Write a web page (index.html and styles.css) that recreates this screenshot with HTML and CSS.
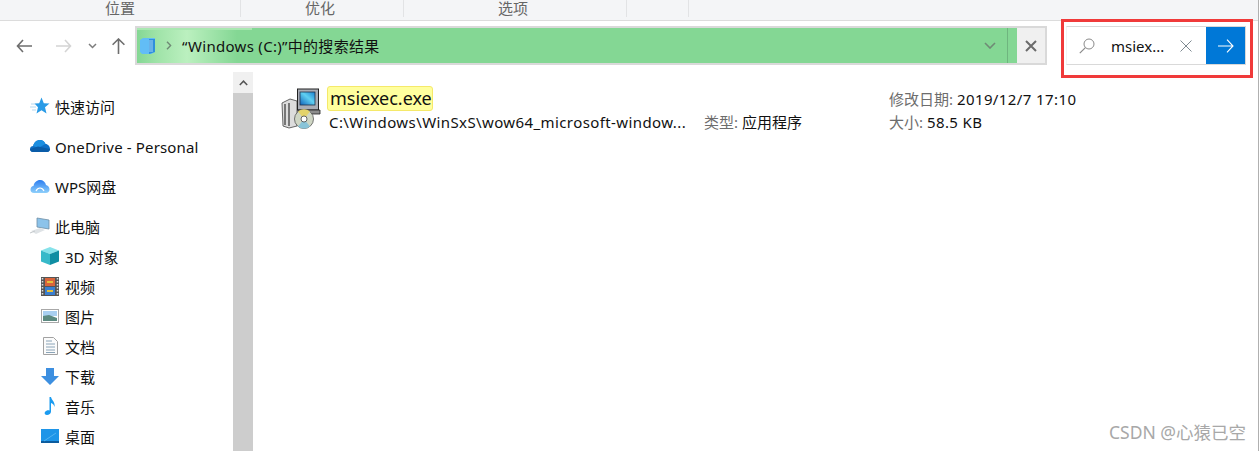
FILE: index.html
```html
<!DOCTYPE html>
<html lang="en">
<head>
  <meta charset="UTF-8" />
  <title>搜索结果</title>
  <link rel="stylesheet" href="styles.css">
</head>

<body>
  <div class="ribbon">
    <div class="ribbon-tab tab-location">位置</div>
    <div class="ribbon-tab tab-optimize">优化</div>
    <div class="ribbon-tab tab-options">选项</div>
    <div class="ribbon-tab tab-empty"></div>
  </div>

  <div class="toolbar">
    <div class="nav-buttons">
      <svg class="nav-back" width="16" height="14" viewBox="0 0 16 14"><path d="M7 1 1.500 7 7 13M1.500 7H16" fill="none" stroke="#6e6e6e" stroke-width="1.600"/></svg>
      <svg class="nav-forward" width="16" height="14" viewBox="0 0 16 14"><path d="M9 1 14.500 7 9 13M14.500 7H0" fill="none" stroke="#d4d4d4" stroke-width="1.600"/></svg>
      <svg class="nav-recent" width="9" height="6" viewBox="0 0 9 6"><path d="M1 1 4.500 4.500 8 1" fill="none" stroke="#7d7d7d" stroke-width="1.500"/></svg>
      <svg class="nav-up" width="13" height="16" viewBox="0 0 13 16"><path d="M.6 6.800 6.500 1 12.400 6.800M6.500 1V16" fill="none" stroke="#6e6e6e" stroke-width="1.600"/></svg>
    </div>

    <div class="address-bar">
      <svg class="drive-icon" width="15" height="16" viewBox="0 0 15 16">
        <path d="M0 2 3 0H15V14L11 16H2L0 14Z" fill="#62bdf6"/>
        <path d="M9 1H15V14L9 16Z" fill="#2f8fdc"/>
        <path d="M10 2V14M12 2V14" stroke="#bfe4fb" stroke-width=".8"/>
      </svg>
      <svg class="crumb-arrow" width="6" height="9" viewBox="0 0 6 9"><path d="M1 .7 4.600 4.500 1 8.300" fill="none" stroke="#6f8a75" stroke-width="1.400"/></svg>
      <span class="address-text">“Windows (C:)”中的搜索结果</span>
      <svg class="address-chevron" width="12" height="7" viewBox="0 0 12 7"><path d="M1 1 6 6 11 1" fill="none" stroke="#6f8a75" stroke-width="1.600"/></svg>
    </div>
    <div class="address-close">
      <svg width="12" height="12" viewBox="0 0 12 12"><path d="M1 1 11 11M11 1 1 11" stroke="#6b6b6b" stroke-width="2"/></svg>
    </div>

    <div class="search-box">
      <svg class="search-icon" width="16" height="16" viewBox="0 0 16 16">
        <circle cx="10" cy="6" r="5" fill="none" stroke="#8a8a8a"/>
        <path d="M6.400 9.600 .8 15.200" stroke="#8a8a8a" stroke-width="1.200"/>
      </svg>
      <span class="search-text">msiex...</span>
      <svg class="search-clear" width="12" height="12" viewBox="0 0 12 12"><path d="M.5 .5 11.500 11.500M11.500 .5 .5 11.500" stroke="#7f8a92"/></svg>
      <div class="search-go">
        <svg width="16" height="14" viewBox="0 0 16 14"><path d="M9 .7 15 7 9 13.300M15 7H0" fill="none" stroke="#fff" stroke-width="1.100"/></svg>
      </div>
    </div>
    <div class="highlight-box"></div>
  </div>

  <div class="main">
    <nav class="sidebar">
      <div class="nav-item nav-top">
        <span class="nav-icon">
          <svg width="20" height="18" viewBox="0 0 20 18">
            <path d="M11.500 .5 13.800 6.200 19.500 6.600 15 10.300 16.500 16.500 11.500 13.200 6.500 16.500 8 10.300 4.500 6.600 9.200 6.200Z" fill="#2a9be6"/>
            <path d="M1 7H5M0 10H6M2 13H6" stroke="#b5d8f0"/>
          </svg>
        </span>
        <span>快速访问</span>
      </div>
      <div class="nav-item nav-top">
        <span class="nav-icon">
          <svg width="20" height="14" viewBox="0 0 20 14">
            <path d="M3 13C1 13 0 11.500 0 10 0 8 1.500 7 3.200 7 4 3 7 1 10 1 12.500 1 14.500 2.500 15.500 5 18 5 20 7.500 20 10 20 11.500 19 13 17 13Z" fill="#0f6fc6"/>
            <path d="M3.200 7C4 3 7 1 10 1 12.500 1 14.500 2.500 15.500 5L8 9Z" fill="#1b8ee0"/>
            <path d="M0 10 8 7.500 20 10C20 11.500 19 13 17 13H3C1 13 0 11.500 0 10Z" fill="#0a5ca8"/>
          </svg>
        </span>
        <span class="latin-wide">OneDrive - Personal</span>
      </div>
      <div class="nav-item nav-top">
        <span class="nav-icon">
          <svg width="20" height="15" viewBox="0 0 20 15">
            <defs><linearGradient id="wps" x1="0" y1="0" x2="0" y2="1"><stop offset="0" stop-color="#2b7df0"/><stop offset="1" stop-color="#8fd0fb"/></linearGradient></defs>
            <path d="M4 14C1.500 14 .5 12.500 .5 10.500 .5 8.500 2 7.200 3.500 7 4 3.500 7 1 10 1 13 1 15.500 3 16 6 18.500 6.500 19.500 8.500 19.500 10.500 19.500 12.500 18 14 16 14Z" fill="url(#wps)"/>
            <path d="M6 12C8 8 12 8 14 12" fill="none" stroke="#fff" stroke-width="1.200"/>
          </svg>
        </span>
        <span>WPS网盘</span>
      </div>
      <div class="nav-item nav-top nav-pc">
        <span class="nav-icon">
          <svg width="20" height="18" viewBox="0 0 20 18">
            <path d="M7 1 19 3V12L7 10Z" fill="#8cc3ea" stroke="#6f8ea5" stroke-width=".8"/>
            <path d="M1 14 10 11 15 13 6 17Z" fill="#dfe3e6"/>
            <path d="M0 16 5 14" stroke="#c4c8cb"/>
          </svg>
        </span>
        <span>此电脑</span>
      </div>
      <div class="nav-item nav-sub">
        <span class="nav-icon">
          <svg width="18" height="18" viewBox="0 0 18 18">
            <path d="M9 0 18 3.500 9 7 0 3.500Z" fill="#86e2ea"/>
            <path d="M0 3.500 9 7V18L0 14.500Z" fill="#37b9c9"/>
            <path d="M18 3.500 9 7V18L18 14.500Z" fill="#0f8ea3"/>
          </svg>
        </span>
        <span>3D 对象</span>
      </div>
      <div class="nav-item nav-sub">
        <span class="nav-icon">
          <svg width="18" height="19" viewBox="0 0 18 19">
            <rect width="18" height="19" fill="#555"/>
            <path d="M1.500 1V18M16.500 1V18" stroke="#ddd" stroke-width="1.500" stroke-dasharray="1.500 1.500"/>
            <rect x="4" y="1" width="10" height="8" fill="#d9643a"/>
            <rect x="4" y="10" width="10" height="8" fill="#3a7fd0"/>
            <path d="M6 5H12M6 14H12" stroke="#e6c13a" stroke-width="2"/>
          </svg>
        </span>
        <span>视频</span>
      </div>
      <div class="nav-item nav-sub">
        <span class="nav-icon">
          <svg width="18" height="14" viewBox="0 0 18 14">
            <rect x=".5" y=".5" width="17" height="13" fill="#fff" stroke="#a8a8a8"/>
            <rect x="2" y="2" width="14" height="5" fill="#a9cff0"/>
            <path d="M2 7 8 6 16 9V12H2Z" fill="#5c8a80"/>
          </svg>
        </span>
        <span>图片</span>
      </div>
      <div class="nav-item nav-sub">
        <span class="nav-icon">
          <svg width="15" height="18" viewBox="0 0 15 18">
            <path d="M.5 .5H10.500L14.500 4.500V17.500H.5Z" fill="#fbfbfb" stroke="#a2a2a2"/>
            <path d="M3 4H9M3 7H12M3 10H12M3 13H12M3 15.500H12" stroke="#8aa4b8"/>
          </svg>
        </span>
        <span>文档</span>
      </div>
      <div class="nav-item nav-sub">
        <span class="nav-icon">
          <svg width="18" height="17" viewBox="0 0 18 17"><path d="M5 0H13V8H18L9 17 0 8H5Z" fill="#3d8fe0"/></svg>
        </span>
        <span>下载</span>
      </div>
      <div class="nav-item nav-sub">
        <span class="nav-icon">
          <svg width="12" height="18" viewBox="0 0 12 18">
            <path d="M5.500 0H7C7.500 3 11.500 5 10.500 10 10 7.500 8.500 6.500 7 6V14.500C7 16.500 5 18 3 18 1 18 0 16.500 1 15 2 13.500 4 13 5.500 13.500Z" fill="#1a9bf0"/>
          </svg>
        </span>
        <span>音乐</span>
      </div>
      <div class="nav-item nav-sub">
        <span class="nav-icon">
          <svg width="18" height="14" viewBox="0 0 18 14">
            <rect width="18" height="14" fill="#1e95e8"/>
            <path d="M0 13H18" stroke="#0b5c9e" stroke-width="2"/>
            <path d="M3 12 15 4" stroke="#52b3f0"/>
          </svg>
        </span>
        <span>桌面</span>
      </div>
    </nav>

    <div class="scrollbar">
      <div class="scroll-up">
        <svg width="9" height="6" viewBox="0 0 9 6"><path d="M.8 5 4.500 1.200 8.200 5" fill="none" stroke="#555" stroke-width="1.500"/></svg>
      </div>
    </div>

    <div class="results">
      <div class="result">
        <svg class="result-icon" width="40" height="41" viewBox="0 0 40 41">
          <defs>
            <linearGradient id="screen" x1="0" y1="1" x2="1" y2="0"><stop offset="0" stop-color="#0f62b8"/><stop offset=".55" stop-color="#5fd0f2"/><stop offset="1" stop-color="#1a7fce"/></linearGradient>
          </defs>
          <path d="M1 15 9 11 16 13V38L8 40 2 38Z" fill="#dcdcdc" stroke="#444" stroke-width=".8"/>
          <path d="M3 16H5V37H3ZM7 15H9V38H7Z" fill="#777"/>
          <rect x="16.500" y="1" width="21" height="21" fill="#a9adb5" stroke="#222"/>
          <rect x="19" y="4" width="15" height="13" fill="url(#screen)" stroke="#20304a" stroke-width=".8"/>
          <path d="M17 22H39V26H17Z" fill="#8d8d8d" stroke="#222" stroke-width=".8"/>
          <circle cx="23" cy="31" r="9.500" fill="#cfd6c4" stroke="#555" stroke-width=".8"/>
          <path d="M23 31 17 23.500A9.500 9.500 0 0 1 29 23.500Z" fill="#e3d36a"/>
          <path d="M23 31 29 38.500A9.500 9.500 0 0 1 17 38.500Z" fill="#8ac4d8"/>
          <circle cx="23" cy="31" r="3" fill="#fff" stroke="#444" stroke-width=".8"/>
        </svg>
        <div class="result-name-col">
          <div class="result-name"><span class="match">msiexec.exe</span></div>
          <div class="result-path">C:\Windows\WinSxS\wow64_microsoft-window...</div>
        </div>
        <div class="result-type"><span class="label">类型:</span> 应用程序</div>
        <div class="result-meta">
          <div><span class="label">修改日期:</span> <span class="value">2019/12/7 17:10</span></div>
          <div><span class="label">大小:</span> <span class="value">58.5 KB</span></div>
        </div>
      </div>
    </div>
  </div>

  <div class="watermark">CSDN @心猿已空</div>
</body>
</html>
```

FILE: styles.css
```css
:root {
  --line: #d9d9d9;
  --muted: #6d6d6d;
  --green: #84d794;
}
* {
  box-sizing: border-box;
}
html, body {
  height: 100%;
}
body {
  margin: 0;
  width: 1259px;
  overflow: hidden;
  position: relative;
  background-color: #fff;
  color: #111;
  font-family: "Noto Sans", "Noto Sans CJK SC", sans-serif;
  font-size: 15px;
  border-right: 1px solid #b0b0b0;
}
svg {
  display: block;
  flex-shrink: 0;
}

/* ribbon */
.ribbon {
  display: flex;
  height: 21px;
  background-color: #f4f5f7;
  border-bottom: 1px solid #dcdcdc;
  color: #666;
  font-size: 15px;
  line-height: 17px;
}
.ribbon-tab {
  display: flex;
  justify-content: center;
  height: 17px;
  padding-right: 4px;
  border-right: 1px solid #e2e3e5;
}
.tab-location { width: 241px; padding-right: 0; }
.tab-optimize { width: 163px; }
.tab-options { width: 223px; }
.tab-empty { width: 62px; }

/* toolbar */
.toolbar {
  display: flex;
  align-items: flex-start;
  height: 51px;
  padding-top: 5px;
  position: relative;
}
.nav-buttons {
  display: flex;
  align-items: center;
  width: 135px;
  height: 39px;
  padding-left: 16px;
}
.nav-forward { margin-left: 24px; }
.nav-recent { margin-left: 16px; }
.nav-up { margin-left: 15px; }
.address-bar {
  display: flex;
  align-items: center;
  width: 882px;
  height: 39px;
  padding-left: 3px;
  padding-right: 21px;
  border: 2px solid var(--line);
  border-right: none;
  background:
    linear-gradient(#a9e8b1, #a9e8b1) 0 0 / 115px 2px no-repeat,
    linear-gradient(90deg, var(--green) 0, #9fe3a8 20px, #bbf0bf 50px, var(--green) 100px);
  box-shadow: inset -9px 0 0 var(--green), inset -10px 0 0 #6fb57f;
}
.crumb-arrow { margin-left: 11px; }
.address-text {
  margin-left: 10px;
  flex-grow: 1;
  letter-spacing: .3px;
}
.address-close {
  display: flex;
  align-items: center;
  justify-content: center;
  width: 30px;
  height: 39px;
  background-color: #f0f0f0;
  border: 2px solid var(--line);
  border-left: none;
}
.search-box {
  display: flex;
  align-items: center;
  width: 180px;
  height: 39px;
  margin-left: 19px;
  padding-left: 12px;
  border: 1px solid var(--line);
  border-left-color: #f3f3f3;
}
.search-text {
  margin-left: 16px;
  width: 69px;
}
.search-go {
  display: flex;
  align-items: center;
  justify-content: center;
  align-self: stretch;
  width: 39px;
  margin-left: auto;
  background-color: #0078d7;
}
.highlight-box {
  position: absolute;
  left: 1061px;
  top: -2px;
  width: 192px;
  height: 59px;
  border: 3px solid #f03a3a;
}

/* main area */
.main {
  display: flex;
  height: 379px;
}
.sidebar {
  width: 233px;
  padding-top: 19px;
}
.nav-item {
  display: flex;
  align-items: center;
  height: 30px;
}
.nav-icon {
  display: flex;
  justify-content: center;
}
.nav-top {
  padding-left: 30px;
  margin-bottom: 10px;
}
.nav-top .nav-icon {
  width: 20px;
  margin-right: 5px;
}
.nav-pc {
  margin-bottom: 0;
}
.nav-sub {
  padding-left: 41px;
}
.nav-sub .nav-icon {
  width: 18px;
  margin-right: 6px;
}
.latin-wide {
  padding-top: 2px;
  letter-spacing: .15px;
}
.scrollbar {
  width: 20px;
  background-color: #cdcdcd;
}
.scroll-up {
  display: flex;
  align-items: center;
  justify-content: center;
  height: 21px;
  background-color: #f0f0f0;
}

/* results */
.results {
  flex-grow: 1;
  padding-top: 14px;
  padding-left: 28px;
}
.result {
  display: flex;
  align-items: flex-start;
}
.result-icon {
  margin-top: 2px;
}
.result-name-col {
  width: 375px;
  margin-left: 8px;
}
.result-name {
  font-size: 18px;
  line-height: 26px;
}
.match {
  display: inline-block;
  margin-left: -2px;
  padding: 0 0 0 2px;
  border-radius: 3px;
  background-color: #ffff9e;
  border: 1px solid #f5e96a;
  line-height: 23px;
  vertical-align: top;
}
.result-path {
  line-height: 20px;
  letter-spacing: .4px;
}
.result-type {
  margin-top: 26px;
  width: 185px;
  line-height: 20px;
}
.result-meta {
  margin-top: 2px;
  line-height: 23px;
}
.value {
  letter-spacing: .4px;
}
.label {
  color: var(--muted);
}
.watermark {
  position: absolute;
  right: 12px;
  bottom: 9px;
  color: #a8a8a8;
  font-size: 17.500px;
  line-height: 20px;
}
```
